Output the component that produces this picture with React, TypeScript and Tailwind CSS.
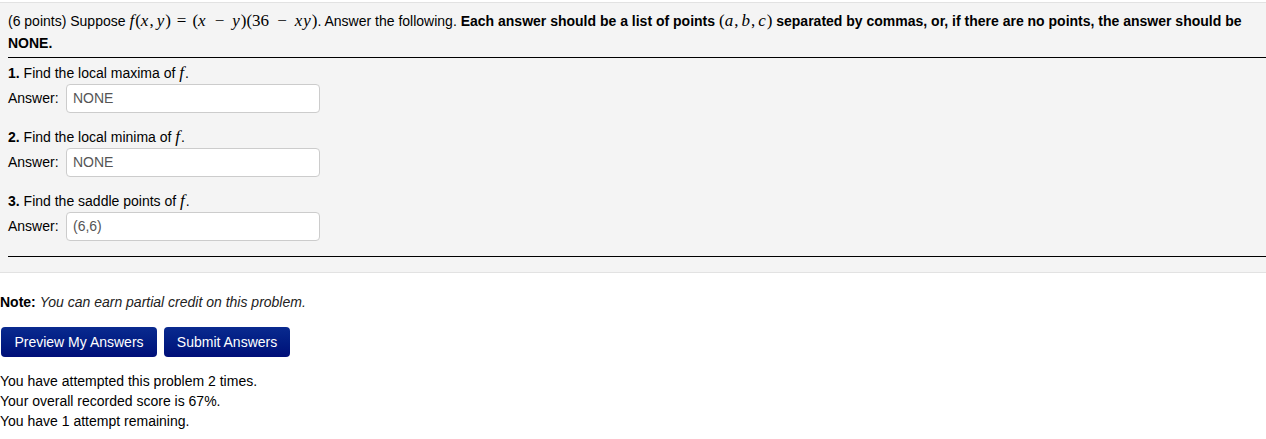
import React from 'react';

// math bits rendered with a serif face, roughly like MathJax output
function M({ children }: { children: React.ReactNode }) {
  return <span className="font-['Liberation_Serif',serif] text-[17px] font-normal">{children}</span>;
}

function V({ children }: { children: React.ReactNode }) {
  return <i className="pr-[1px]">{children}</i>;
}

function Eq() {
  return <span className="mx-[6px]">=</span>;
}

function Minus() {
  return <span className="mx-[8px]">−</span>;
}

function Item({ num, text, value }: { num: number; text: string; value: string }) {
  return (
    <div>
      <div className="leading-[20px] h-[20px]">
        <b>{num}.</b> {text} <M><V>f</V></M>.
      </div>
      <div className="flex items-center mt-px">
        <span className="w-[58px]">Answer:</span>
        <div className="w-[254px] h-[29px] bg-white border border-[#cccccc] rounded-[4px] pl-[6px] flex items-center text-[#555555]">
          {value}
        </div>
      </div>
    </div>
  );
}

export default function App() {
  const items = [
    { num: 1, text: 'Find the local maxima of', value: 'NONE' },
    { num: 2, text: 'Find the local minima of', value: 'NONE' },
    { num: 3, text: 'Find the saddle points of', value: '(6,6)' },
  ];

  return (
    <div className="min-h-screen bg-white text-[14px] text-black font-['Liberation_Sans',Arial,sans-serif]">
      <div className="h-[2px]" />

      {/* problem box */}
      <div className="bg-[#f4f4f4] border-t border-b border-[#e2e2e2] pl-2 pt-[7px] pb-[15px]">
        <p className="leading-[22px] pr-4">
          (6 points) Suppose{' '}
          <M>
            <V>f</V>(<V>x</V>,<span className="ml-[3px]" /><V>y</V>)<Eq />(<V>x</V><Minus /><V>y</V>)(36<Minus /><V>x</V><V>y</V>)
          </M>
          . Answer the following.{' '}
          <b>
            Each answer should be a list of points{' '}
            <M>
              (<V>a</V>,<span className="ml-[3px]" /><V>b</V>,<span className="ml-[3px]" /><V>c</V>)
            </M>{' '}
            separated by commas, or, if there are no points, the answer should be NONE.
          </b>
        </p>

        <div className="h-px bg-black mt-[3px]" />

        <div className="mt-[5px] flex flex-col gap-[14px]">
          {items.map(it => (
            <Item key={it.num} {...it} />
          ))}
        </div>

        <div className="h-px bg-black mt-[15px]" />
      </div>

      <p className="mt-[19px] leading-[20px]">
        <b>Note:</b> <i className="text-[#222]">You can earn partial credit on this problem.</i>
      </p>

      <div className="flex gap-[7px] mt-[15px] pl-px">
        <button className="h-[30px] w-[156px] rounded-[4px] bg-linear-to-b from-[#0a2a8f] to-[#000e78] text-white text-[14px]">
          Preview My Answers
        </button>
        <button className="h-[30px] w-[126px] rounded-[4px] bg-linear-to-b from-[#0a2a8f] to-[#000e78] text-white text-[14px]">
          Submit Answers
        </button>
      </div>

      <div className="mt-[14px] leading-[20px]">
        <div>You have attempted this problem 2 times.</div>
        <div>Your overall recorded score is 67%.</div>
        <div>You have 1 attempt remaining.</div>
      </div>
    </div>
  );
}
